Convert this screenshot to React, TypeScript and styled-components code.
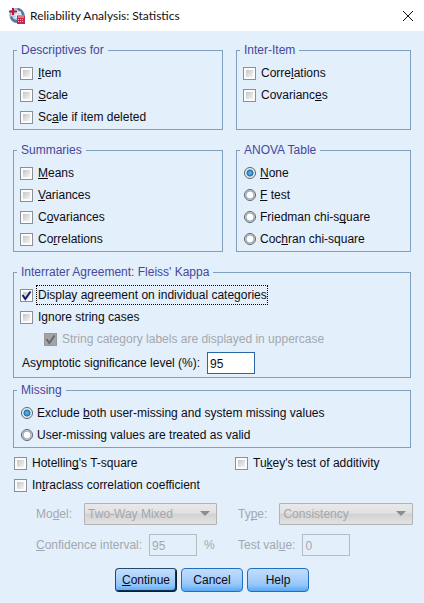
import React, { useId, useState } from "react";
import styled, { createGlobalStyle, css } from "styled-components";

const ink = "#0c0c14";
const faded = "#a3a8ae";

const GlobalStyle = createGlobalStyle`
  *, *::before, *::after { box-sizing: border-box; }
  body { margin: 0; background: #e3effb; }
  body, button, input, select {
    font-family: "Liberation Sans", Arial, sans-serif;
    font-size: 12px;
    line-height: 16px;
    color: ${ink};
  }
  u { text-decoration-thickness: 1px; text-underline-offset: 1px; text-decoration-skip-ink: none; }
`;

const Dialog = styled.main`
  display: flex;
  flex-direction: column;
  min-height: 100vh;
  background: #e3effb;
`;

const TitleBar = styled.header`
  display: flex;
  align-items: center;
  height: 31px;
  padding: 0 10px 0 9px;
  background: #fff;
`;

const Title = styled.h1`
  flex: 1;
  margin: 0 0 0 5px;
  font: 400 12px/16px Lato, "Open Sans", sans-serif;
  color: #111;
`;

const CloseButton = styled.button`
  display: flex;
  padding: 0;
  border: 0;
  background: none;
`;

const Content = styled.form`
  display: flex;
  flex-direction: column;
  padding: 11px 13px 10px;
`;

const Columns = styled.div`
  display: grid;
  grid-template-columns: 6fr 5fr;
  column-gap: 13px;
  margin-bottom: 12px;
`;

const Group = styled.fieldset<{ $gapAfter?: number }>`
  min-width: 0;
  margin: 0 0 ${(p) => p.$gapAfter ?? 0}px;
  padding: 4px 6px 1px;
  border: 1px solid #7f9fbf;
`;

const Legend = styled.legend`
  margin-left: -3px;
  padding: 0 4px;
  color: #45489c;
`;

const Option = styled.label<{ $indent?: number; $disabled?: boolean }>`
  display: flex;
  align-items: center;
  gap: 4px;
  height: 22px;
  padding-left: ${(p) => p.$indent ?? 0}px;
  white-space: nowrap;
  color: ${(p) => (p.$disabled ? faded : ink)};
`;

const OptionText = styled.span<{ $focused?: boolean }>`
  padding: 1px 0 1px 1px;
  outline: ${(p) => (p.$focused ? "1px dotted #000" : "none")};
`;

const MarkBox = styled.span`
  display: grid;
  flex: none;
  place-items: center;
  & > * { grid-area: 1 / 1; }
  & > svg { pointer-events: none; }
`;

const CheckInput = styled.input`
  appearance: none;
  width: 13px;
  height: 13px;
  margin: 0;
  border: 1px solid #8b9096;
  background: linear-gradient(135deg, #c4c6c8, #f4f4f4) content-box, #fbfbfb;
  padding: 2px;
  &:disabled { background: #a2a4a7; border-color: #96989b; }
`;

const RadioInput = styled.input`
  appearance: none;
  width: 12px;
  height: 12px;
  margin: 0 -1px 0 1px;
  border: 1px solid #59636d;
  border-radius: 50%;
  background: radial-gradient(circle, #fff 0 3px, #8d979f 4px, #eef3f7 5px);
  &:checked {
    background: radial-gradient(circle at 50% 50%, #55aee6 0 1px, #1f6fae 3px, #2b6798 3px, #e8f3fb 4px);
  }
`;

const FieldRow = styled.div`
  display: flex;
  align-items: center;
  gap: 7px;
  height: 26px;
  padding-left: 2px;
`;

const TextField = styled.input`
  width: 48px;
  height: 22px;
  padding: 1px 2px 0;
  border: 1px solid #2a66a2;
  border-radius: 0;
  background: #fff;
  &:disabled {
    border-color: #b4bbc2;
    background: transparent;
    color: ${faded};
    opacity: 1;
  }
`;

const LooseColumns = styled(Columns)`
  grid-template-columns: 221fr 176fr;
  column-gap: 0;
  align-items: start;
  margin: 4px 0 7px 1px;
`;

const Details = styled.div`
  display: grid;
  grid-template-columns: 181fr 175fr;
  gap: 9px 21px;
  margin: 0 -2px 12px 23px;
  color: ${faded};
`;

const DetailCell = styled.div<{ $gap: number }>`
  display: flex;
  align-items: center;
  gap: ${(p) => p.$gap}px;
  min-width: 0;
  white-space: nowrap;
`;

const SelectBox = styled.span`
  display: grid;
  flex: 1;
  align-items: center;
  max-width: 280px;
  & > * { grid-area: 1 / 1; }
  & > svg { justify-self: end; margin: 0 7px 2px 0; pointer-events: none; }
`;

const Select = styled.select`
  appearance: none;
  width: 100%;
  height: 22px;
  padding: 0 20px 0 3px;
  border: 1px solid #b3b3b3;
  border-radius: 1px;
  background: linear-gradient(#e9e9e9 0, #e1e1e1 45%, #d2d2d2 50%, #e2e2e2 100%);
  &:disabled { color: ${faded}; opacity: 1; }
`;

const Actions = styled.footer`
  display: flex;
  justify-content: center;
  gap: 4px;
`;

const ActionButton = styled.button<{ $primary?: boolean }>`
  width: 62px;
  height: 24px;
  padding: 0;
  border: 1px solid #1f70c4;
  border-radius: 4px;
  background: linear-gradient(#c4defa 0, #a5cefa 50%, #8fc4fb 75%, #58a9f6 100%);
  ${(p) =>
    p.$primary &&
    css`
      border-color: #24496f #0b1d33 #0b1d33 #24496f;
      box-shadow: inset -1px -1px 0 #12304f;
    `}
`;

function AppIcon() {
  return (
    <svg width="16" height="17" viewBox="0 0 16 17" aria-hidden="true">
      <circle cx="8" cy="8.5" r="7.6" fill="#7f9fc4" />
      <path d="M3 4.5Q8-1 13 4.5L15 9H8V15.8Q1.5 15 1 9Z" fill="#b9cde4" />
      <path d="M1 10Q2 15 8 16V13Q4 13 3 9ZM9 1Q14 2 15.5 8H13Q12 4 8 3Z" fill="#54779f" />
      <path d="M6 5.5H12M5 8H13M5 10.5H8M8 3V11M11 4V8" stroke="#f0f6fc" />
      <path d="M4 1V8M0 4.5H8" stroke="#c5143c" strokeWidth="2" />
      <path d="M8 8.5H16V17H8Z" fill="#c32b4d" />
      <path d="M9 10H15" stroke="#f3c4cf" />
      <path d="M9 12.5H15M9 14.5H15" stroke="#f0b4c2" strokeDasharray="1 1" />
    </svg>
  );
}

function CheckOption(props: {
  children: React.ReactNode;
  checked?: boolean;
  disabled?: boolean;
  focused?: boolean;
  indent?: number;
}) {
  const [on, setOn] = useState(!!props.checked);
  return (
    <Option $indent={props.indent} $disabled={props.disabled}>
      <MarkBox>
        <CheckInput type="checkbox" checked={on} disabled={props.disabled} onChange={() => setOn(!on)} />
        {on && (
          <svg width="11" height="11" viewBox="0 0 11 11" aria-hidden="true">
            <path d="M1.5 5 4.3 9 9.5 1.5" fill="none" stroke={props.disabled ? "#68696c" : "#17177c"} strokeWidth="2" />
          </svg>
        )}
      </MarkBox>
      <OptionText $focused={props.focused}>{props.children}</OptionText>
    </Option>
  );
}

function RadioOption(props: { children: React.ReactNode; name: string; checked?: boolean }) {
  return (
    <Option>
      <RadioInput type="radio" name={props.name} defaultChecked={props.checked} />
      <OptionText>{props.children}</OptionText>
    </Option>
  );
}

function DisabledSelect({ id, value }: { id: string; value: string }) {
  return (
    <SelectBox>
      <Select id={id} disabled defaultValue={value}>
        <option>{value}</option>
      </Select>
      <svg width="10" height="5" viewBox="0 0 10 5" aria-hidden="true">
        <path d="M0 0H10L5 5Z" fill="#8c8c8c" />
      </svg>
    </SelectBox>
  );
}

export default function App() {
  const id = useId();
  return (
    <Dialog>
      <GlobalStyle />
      <TitleBar>
        <AppIcon />
        <Title>Reliability Analysis: Statistics</Title>
        <CloseButton type="button" aria-label="Close">
          <svg width="12" height="12" viewBox="0 0 12 12" aria-hidden="true">
            <path d="M1 1 11 11M11 1 1 11" stroke="#111" fill="none" />
          </svg>
        </CloseButton>
      </TitleBar>
      <Content onSubmit={(e) => e.preventDefault()}>
        <Columns>
          <Group>
            <Legend>Descriptives for</Legend>
            <CheckOption><u>I</u>tem</CheckOption>
            <CheckOption><u>S</u>cale</CheckOption>
            <CheckOption>Sc<u>a</u>le if item deleted</CheckOption>
          </Group>
          <Group>
            <Legend>Inter-Item</Legend>
            <CheckOption>Corre<u>l</u>ations</CheckOption>
            <CheckOption>Covarianc<u>e</u>s</CheckOption>
          </Group>
        </Columns>
        <Columns>
          <Group>
            <Legend>Summaries</Legend>
            <CheckOption><u>M</u>eans</CheckOption>
            <CheckOption><u>V</u>ariances</CheckOption>
            <CheckOption>C<u>o</u>variances</CheckOption>
            <CheckOption>Co<u>r</u>relations</CheckOption>
          </Group>
          <Group>
            <Legend>ANOVA Table</Legend>
            <RadioOption name="anova" checked><u>N</u>one</RadioOption>
            <RadioOption name="anova"><u>F</u> test</RadioOption>
            <RadioOption name="anova">Friedman chi-s<u>q</u>uare</RadioOption>
            <RadioOption name="anova">Coc<u>h</u>ran chi-square</RadioOption>
          </Group>
        </Columns>
        <Group $gapAfter={4}>
          <Legend>Interrater Agreement: Fleiss' Kappa</Legend>
          <CheckOption checked focused>Display agreement on individual categories</CheckOption>
          <CheckOption>Ignore string cases</CheckOption>
          <CheckOption checked disabled indent={24}>String category labels are displayed in uppercase</CheckOption>
          <FieldRow>
            <label htmlFor={`${id}-level`}>Asymptotic significance level (%):</label>
            <TextField id={`${id}-level`} defaultValue="95" />
          </FieldRow>
        </Group>
        <Group>
          <Legend>Missing</Legend>
          <RadioOption name="missing" checked>Exclude <u>b</u>oth user-missing and system missing values</RadioOption>
          <RadioOption name="missing">User-missing values are treated as valid</RadioOption>
        </Group>
        <LooseColumns>
          <div>
            <CheckOption>Hotellin<u>g</u>'s T-square</CheckOption>
            <CheckOption>In<u>t</u>raclass correlation coefficient</CheckOption>
          </div>
          <CheckOption>Tu<u>k</u>ey's test of additivity</CheckOption>
        </LooseColumns>
        <Details>
          <DetailCell $gap={12}>
            <label htmlFor={`${id}-model`}>Mo<u>d</u>el:</label>
            <DisabledSelect id={`${id}-model`} value="Two-Way Mixed" />
          </DetailCell>
          <DetailCell $gap={12}>
            <label htmlFor={`${id}-type`}>Ty<u>p</u>e:</label>
            <DisabledSelect id={`${id}-type`} value="Consistency" />
          </DetailCell>
          <DetailCell $gap={7}>
            <label htmlFor={`${id}-ci`}><u>C</u>onfidence interval:</label>
            <TextField id={`${id}-ci`} disabled defaultValue="95" />
            <span>%</span>
          </DetailCell>
          <DetailCell $gap={7}>
            <label htmlFor={`${id}-test`}>Test val<u>u</u>e:</label>
            <TextField id={`${id}-test`} disabled defaultValue="0" />
          </DetailCell>
        </Details>
        <Actions>
          <ActionButton $primary type="submit"><u>C</u>ontinue</ActionButton>
          <ActionButton type="button">Cancel</ActionButton>
          <ActionButton type="button">Help</ActionButton>
        </Actions>
      </Content>
    </Dialog>
  );
}
